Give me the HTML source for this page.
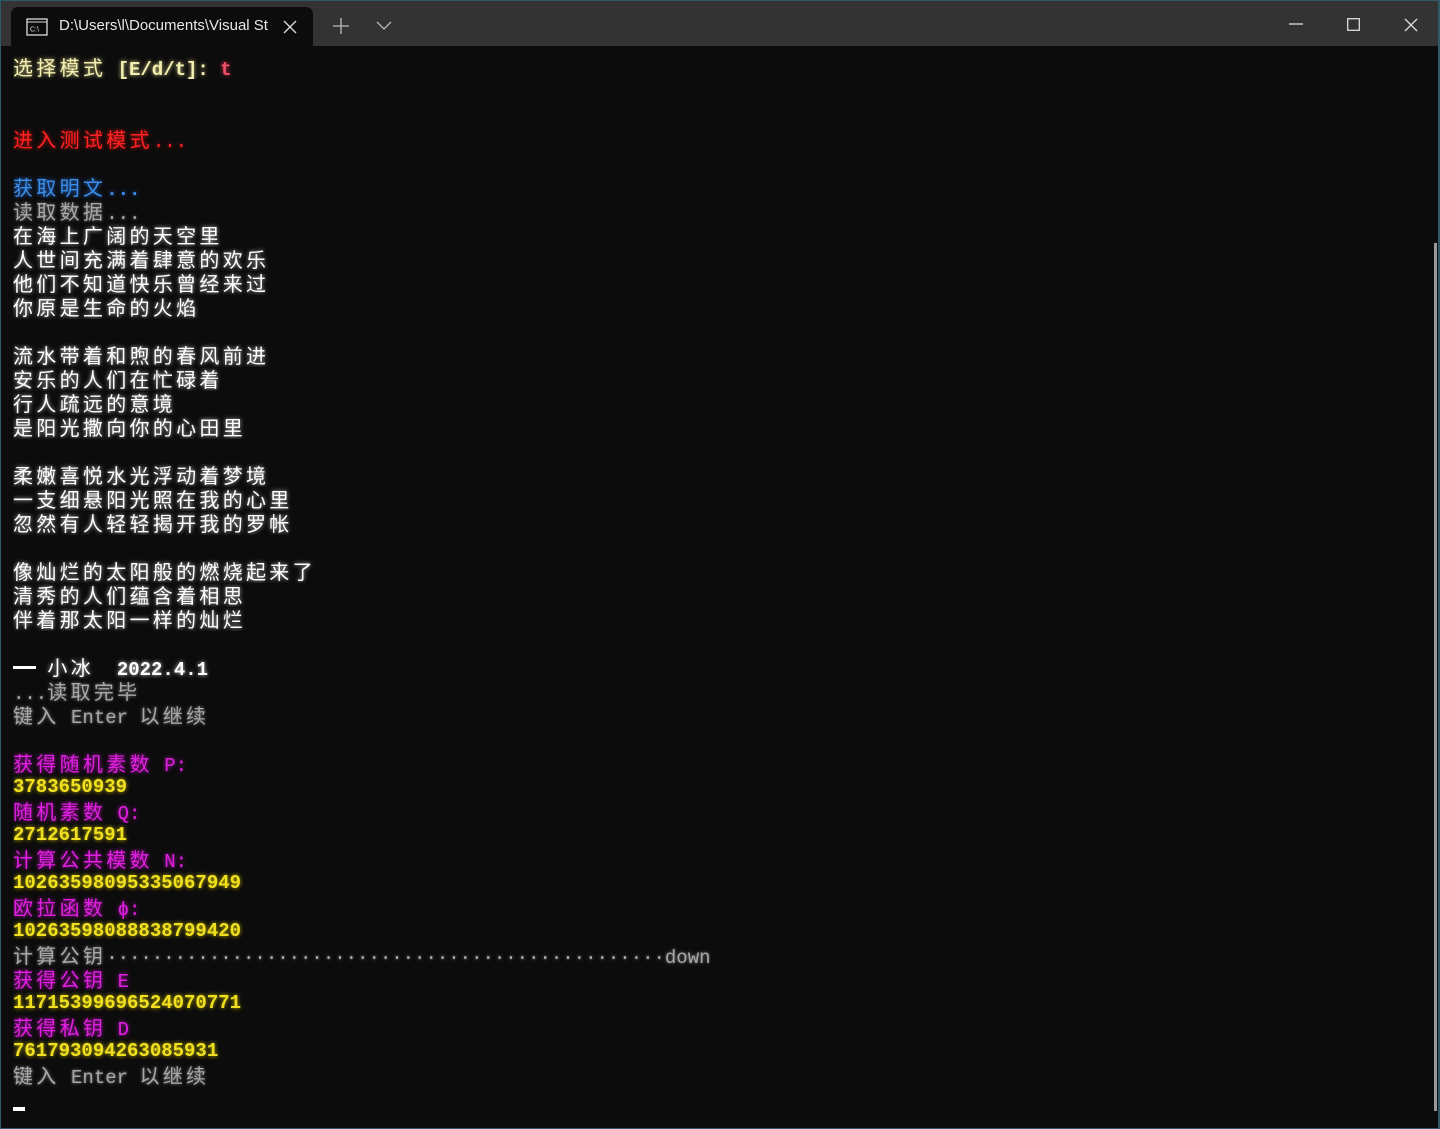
<!DOCTYPE html>
<html><head><meta charset="utf-8"><style>
html,body{margin:0;padding:0;width:1440px;height:1129px;overflow:hidden;background:#0c0c0c;}
.win{position:absolute;left:0;top:0;width:1440px;height:1129px;background:#0c0c0c;box-sizing:border-box;border:1px solid #2d5a66;border-right:2px solid #2d5a66;overflow:hidden;}
.title{position:absolute;left:0;top:0;width:1438px;height:45px;background:#333333;}
.tab{position:absolute;left:10px;top:6px;width:302px;height:40px;background:#0c0c0c;border-radius:7px 7px 0 0;}
.tab .t{position:absolute;left:48px;top:10px;font:15px "Liberation Sans",sans-serif;color:#e8e8e8;white-space:nowrap;width:210px;overflow:hidden;}
.term{position:absolute;left:12px;top:54px;font-family:"Liberation Mono","Noto Sans CJK SC",monospace;font-size:19px;line-height:24px;font-weight:bold;}
.term div{height:24px;white-space:pre;overflow:hidden;}
.c{font-family:"Noto Sans CJK SC","WenQuanYi Zen Hei",sans-serif;font-size:20px;letter-spacing:3.3px;font-weight:normal;}
.y{color:#f2efb0;text-shadow:0 0 4px #d8d08a;}
.r{color:#ff2222;text-shadow:0 0 4px #e01010;font-weight:normal}
.pk{color:#f0506a;text-shadow:0 0 4px #e03050;}
.b{color:#3b8eea;text-shadow:0 0 4px #2a6ed0;}
.g{color:#a8a8a8;text-shadow:0 0 3px #808080;font-weight:normal}
.w{color:#ffffff;text-shadow:0 0 4px #cccccc;}
.m{color:#e020e0;text-shadow:0 0 4px #c010c0;font-weight:normal}
.ye{color:#f0e020;text-shadow:0 0 4px #c8b800;}
.sb{position:absolute;left:1433px;top:242px;width:3px;height:868px;background:#9a9a9a;}
.cur{display:inline-block;width:12px;height:6px;background:#fff;vertical-align:-9px;}
.dash{display:inline-block;width:23px;height:0;border-top:3px solid #fff;vertical-align:6px;}
</style></head><body>
<div class="win">
<div class="title">
 <div class="tab">
  <svg style="position:absolute;left:15px;top:11px" width="22" height="18" viewBox="0 0 22 18"><rect x="1" y="1" width="20" height="16" fill="none" stroke="#ddd" stroke-width="1.3"/><line x1="1" y1="4" x2="21" y2="4" stroke="#ddd"/><text x="4" y="13.5" font-size="7" fill="#ddd" font-family="Liberation Sans">C:\</text></svg>
  <div class="t">D:\Users\l\Documents\Visual Studio</div>
  <svg style="position:absolute;left:272px;top:13px" width="14" height="14"><path d="M1 1L13 13M13 1L1 13" stroke="#ddd" stroke-width="1.3"/></svg>
 </div>
 <svg style="position:absolute;left:331px;top:16px" width="18" height="18"><path d="M9 1V17M1 9H17" stroke="#bbb" stroke-width="1.3"/></svg>
 <svg style="position:absolute;left:375px;top:20px" width="16" height="10"><path d="M1 1L8 8L15 1" fill="none" stroke="#bbb" stroke-width="1.3"/></svg>
 <svg style="position:absolute;left:1288px;top:22px" width="14" height="2"><path d="M0 1H14" stroke="#ddd" stroke-width="1.3"/></svg>
 <svg style="position:absolute;left:1346px;top:17px" width="13" height="13"><rect x="0.7" y="0.7" width="11.6" height="11.6" fill="none" stroke="#ddd" stroke-width="1.3"/></svg>
 <svg style="position:absolute;left:1403px;top:17px" width="14" height="14"><path d="M1 1L13 13M13 1L1 13" stroke="#ddd" stroke-width="1.3"/></svg>
</div>
<div class="term">
<div class="y"><span class="c">选择模式</span> [E/d/t]: <span class="pk">t</span></div>
<div></div>
<div></div>
<div class="r"><span class="c">进入测试模式</span>...</div>
<div></div>
<div class="b"><span class="c">获取明文</span>...</div>
<div class="g"><span class="c">读取数据</span>...</div>
<div class="w"><span class="c">在海上广阔的天空里</span></div>
<div class="w"><span class="c">人世间充满着肆意的欢乐</span></div>
<div class="w"><span class="c">他们不知道快乐曾经来过</span></div>
<div class="w"><span class="c">你原是生命的火焰</span></div>
<div></div>
<div class="w"><span class="c">流水带着和煦的春风前进</span></div>
<div class="w"><span class="c">安乐的人们在忙碌着</span></div>
<div class="w"><span class="c">行人疏远的意境</span></div>
<div class="w"><span class="c">是阳光撒向你的心田里</span></div>
<div></div>
<div class="w"><span class="c">柔嫩喜悦水光浮动着梦境</span></div>
<div class="w"><span class="c">一支细悬阳光照在我的心里</span></div>
<div class="w"><span class="c">忽然有人轻轻揭开我的罗帐</span></div>
<div></div>
<div class="w"><span class="c">像灿烂的太阳般的燃烧起来了</span></div>
<div class="w"><span class="c">清秀的人们蕴含着相思</span></div>
<div class="w"><span class="c">伴着那太阳一样的灿烂</span></div>
<div></div>
<div class="w"><span class="dash"></span> <span class="c">小冰</span>  2022.4.1</div>
<div class="g">...<span class="c">读取完毕</span></div>
<div class="g"><span class="c">键入</span> Enter <span class="c">以继续</span></div>
<div></div>
<div class="m"><span class="c">获得随机素数</span> P:</div>
<div class="ye">3783650939</div>
<div class="m"><span class="c">随机素数</span> Q:</div>
<div class="ye">2712617591</div>
<div class="m"><span class="c">计算公共模数</span> N:</div>
<div class="ye">10263598095335067949</div>
<div class="m"><span class="c">欧拉函数</span> ϕ:</div>
<div class="ye">10263598088838799420</div>
<div class="g"><span class="c">计算公钥</span>·················································down</div>
<div class="m"><span class="c">获得公钥</span> E</div>
<div class="ye">11715399696524070771</div>
<div class="m"><span class="c">获得私钥</span> D</div>
<div class="ye">761793094263085931</div>
<div class="g"><span class="c">键入</span> Enter <span class="c">以继续</span></div>
<div><span class="cur"></span></div>
</div>
<div class="sb"></div>
</div>
</body></html>
